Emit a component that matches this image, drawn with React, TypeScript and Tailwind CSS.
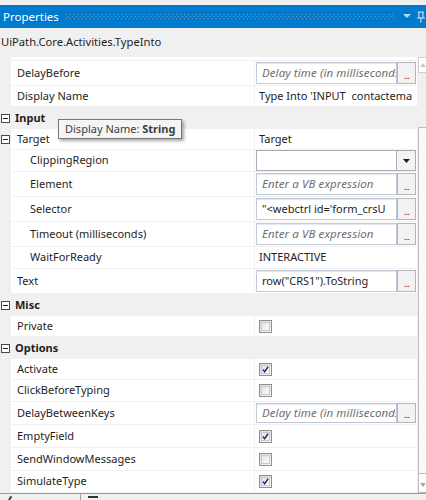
import type { ReactNode } from 'react'
import clsx from 'clsx'

function Expander() {
  return (
    <span className="relative flex h-[9px] w-[9px] items-center justify-center border border-[#4a4a4a] bg-white">
      <span className="h-[1px] w-[5px] bg-[#1e1e1e]" />
    </span>
  )
}

function DotsButton() {
  return (
    <div className="flex h-full w-[19px] shrink-0 items-end justify-center border border-[#b5b5b5] bg-[#f3f3f3] pb-[4px]">
      <span className="text-[9px] leading-[6px] tracking-[-0.5px] text-[#333]">...</span>
    </div>
  )
}

function InputBox({ text, placeholder }: { text?: string; placeholder?: string }) {
  return (
    <div className="flex h-full w-full items-stretch py-[1px] pl-[1px]">
      <div className="flex w-[141px] shrink-0 items-center overflow-hidden whitespace-nowrap border border-[#c2cad8] bg-white pl-[5px] shadow-[inset_0_1px_0_#e3e8f0]">
        {placeholder ? (
          <span className="text-[11.5px] italic tracking-[0.1px] text-[#6e6e6e]">{placeholder}</span>
        ) : (
          <span>{text}</span>
        )}
      </div>
      <DotsButton />
    </div>
  )
}

function Combo() {
  return (
    <div className="flex h-full w-full items-stretch pl-[1px]">
      <div className="w-[141px] shrink-0 border border-[#abadb3] bg-white" />
      <div className="flex w-[19px] shrink-0 items-center justify-center border border-[#abadb3] border-l-0 bg-[#f3f3f3]">
        <svg width="7" height="4" viewBox="0 0 7 4">
          <path d="M0 0h7L3.5 4z" fill="#1e1e1e" />
        </svg>
      </div>
    </div>
  )
}

function Check({ checked }: { checked?: boolean }) {
  return (
    <span className="ml-[4px] flex h-[13px] w-[13px] items-center justify-center border border-[#8e8f8f] bg-[linear-gradient(135deg,#dcdcdc,#f8f8f8)] p-[1px]">
      <span className="flex h-full w-full items-center justify-center border border-[#c9c9c9] bg-[linear-gradient(135deg,#e3e3e3,#fbfbfb)]">
        {checked && (
          <svg width="9" height="9" viewBox="0 0 9 9">
            <path d="M1.2 4.6 3.4 7.4 7.8 1" fill="none" stroke="#21307a" strokeWidth="1.9" />
          </svg>
        )}
      </span>
    </span>
  )
}

function Prop({
  h,
  label,
  nested,
  expander,
  children,
}: {
  h: string
  label: string
  nested?: boolean
  expander?: boolean
  children?: ReactNode
}) {
  return (
    <div className={clsx('box-border flex shrink-0 border-b border-[#f0f0f0]', h)}>
      <div className="flex w-[11px] shrink-0 items-center justify-center bg-[#f0f0f0]">
        {expander && <Expander />}
      </div>
      <div
        className={clsx(
          'flex w-[244px] shrink-0 items-center border-r border-[#f0f0f0] bg-white',
          nested ? 'pl-[19px]' : 'pl-[6px]',
        )}
      >
        {label}
      </div>
      <div className="flex min-w-0 flex-1 items-center overflow-hidden whitespace-nowrap bg-white">{children}</div>
    </div>
  )
}

function Category({ label }: { label: string }) {
  return (
    <div className="box-border flex h-[22px] shrink-0 items-center bg-[#f0f0f0]">
      <div className="flex w-[11px] shrink-0 justify-center">
        <Expander />
      </div>
      <span className="pl-[4px] font-bold">{label}</span>
    </div>
  )
}

function Val({ children }: { children: ReactNode }) {
  return <span className="pl-[4px]">{children}</span>
}

export default function App() {
  return (
    <div className="relative h-[500px] w-[426px] overflow-hidden bg-[#f0f0f0] font-['Noto_Sans','Open_Sans',sans-serif] text-[11px] text-[#1e1e1e]">
      <div className="h-[5px]" />

      {/* title bar */}
      <div className="flex h-[23px] items-center bg-[#007acc]">
        <span className="pl-[3px] text-[11.5px] text-white">Properties</span>
        <svg className="ml-[7px]" width="335" height="6" viewBox="0 0 335 6">
          <defs>
            <pattern id="grip" width="4" height="4" patternUnits="userSpaceOnUse">
              <rect x="0" y="0" width="1" height="1" fill="#5fa8e0" />
              <rect x="2" y="2" width="1" height="1" fill="#5fa8e0" />
            </pattern>
          </defs>
          <rect width="335" height="6" fill="url(#grip)" />
        </svg>
        <svg className="ml-[8px]" width="8" height="5" viewBox="0 0 8 5">
          <path d="M0 0h8L4 4z" fill="#b9daf3" />
        </svg>
        <svg className="ml-[5px]" width="10" height="12" viewBox="0 0 10 12">
          <path d="M2 1h6M3 1v6M7 1v6M1 7h8M5 7v5" fill="none" stroke="#e6f1fb" strokeWidth="1" />
        </svg>
      </div>

      <div className="flex h-[29px] items-center pl-[1px] text-[11.2px]">UiPath.Core.Activities.TypeInto</div>

      <div className="flex h-[436px]">
        <div className="flex w-[417px] flex-col">
          <div className="box-border flex h-[4px] shrink-0 border-b border-[#f0f0f0]">
            <div className="w-[11px] bg-[#f0f0f0]" />
            <div className="flex-1 bg-white" />
          </div>
          <Prop h="h-[25px]" label="DelayBefore">
            <InputBox placeholder="Delay time (in milliseconds)" />
          </Prop>
          <Prop h="h-[21px]" label="Display Name">
            <Val>Type Into 'INPUT&nbsp; contactema</Val>
          </Prop>
          <Category label="Input" />
          <Prop h="h-[21px]" label="Target" expander>
            <Val>Target</Val>
          </Prop>
          <Prop h="h-[22px]" label="ClippingRegion" nested>
            <Combo />
          </Prop>
          <Prop h="h-[25px]" label="Element" nested>
            <InputBox placeholder="Enter a VB expression" />
          </Prop>
          <Prop h="h-[25px]" label="Selector" nested>
            <InputBox text={`"<webctrl id='form_crsU`} />
          </Prop>
          <Prop h="h-[25px]" label="Timeout (milliseconds)" nested>
            <InputBox placeholder="Enter a VB expression" />
          </Prop>
          <Prop h="h-[22px]" label="WaitForReady" nested>
            <Val>INTERACTIVE</Val>
          </Prop>
          <Prop h="h-[25px]" label="Text">
            <InputBox text={`row("CRS1").ToString`} />
          </Prop>
          <Category label="Misc" />
          <Prop h="h-[21px]" label="Private">
            <Check />
          </Prop>
          <Category label="Options" />
          <Prop h="h-[21px]" label="Activate">
            <Check checked />
          </Prop>
          <Prop h="h-[22px]" label="ClickBeforeTyping">
            <Check />
          </Prop>
          <Prop h="h-[23px]" label="DelayBetweenKeys">
            <InputBox placeholder="Delay time (in milliseconds)" />
          </Prop>
          <Prop h="h-[23px]" label="EmptyField">
            <Check checked />
          </Prop>
          <Prop h="h-[23px]" label="SendWindowMessages">
            <Check />
          </Prop>
          <Prop h="h-[22px]" label="SimulateType">
            <Check checked />
          </Prop>
        </div>

        {/* scrollbar */}
        <div className="flex w-[9px] flex-col pl-[1px]">
          <div className="flex h-[16px] items-center justify-center border border-r-0 border-[#d0d0d0] bg-white">
            <svg width="6" height="4" viewBox="0 0 6 4">
              <path d="M0 4h6L3 0z" fill="#c8c8c8" />
            </svg>
          </div>
          <div className="h-[54px]" />
          <div className="flex-1 border border-r-0 border-[#bcbcbc] bg-[#fafafa]" />
          <div className="flex h-[19px] items-end justify-center border border-r-0 border-t-0 border-[#bcbcbc] bg-white pb-[5px]">
            <svg width="6" height="4" viewBox="0 0 6 4">
              <path d="M0 0h6L3 4z" fill="#a8a8a8" />
            </svg>
          </div>
        </div>
      </div>

      {/* bottom tab strip */}
      <div className="relative h-[7px] border-t border-[#9a9a9a] bg-[#f0f0f0]">
        <div className="absolute left-[9px] top-[2px] h-[5px] w-[2px] rotate-[30deg] bg-[#444]" />
        <div className="absolute left-[80px] top-0 h-[7px] w-[1px] bg-[#a0a0a0]" />
        <div className="absolute left-[88px] top-[2px] h-[2px] w-[10px] bg-[#333]" />
      </div>

      {/* tooltip */}
      <div className="absolute left-[58px] top-[119px] flex h-[20px] w-[124px] items-center border border-[#767676] bg-[#f5f5f5] pl-[6px] shadow-[2px_2px_3px_rgba(0,0,0,0.35)]">
        <span className="whitespace-nowrap text-[#3c3c3c]">
          Display Name: <span className="font-bold">String</span>
        </span>
      </div>
    </div>
  )
}
